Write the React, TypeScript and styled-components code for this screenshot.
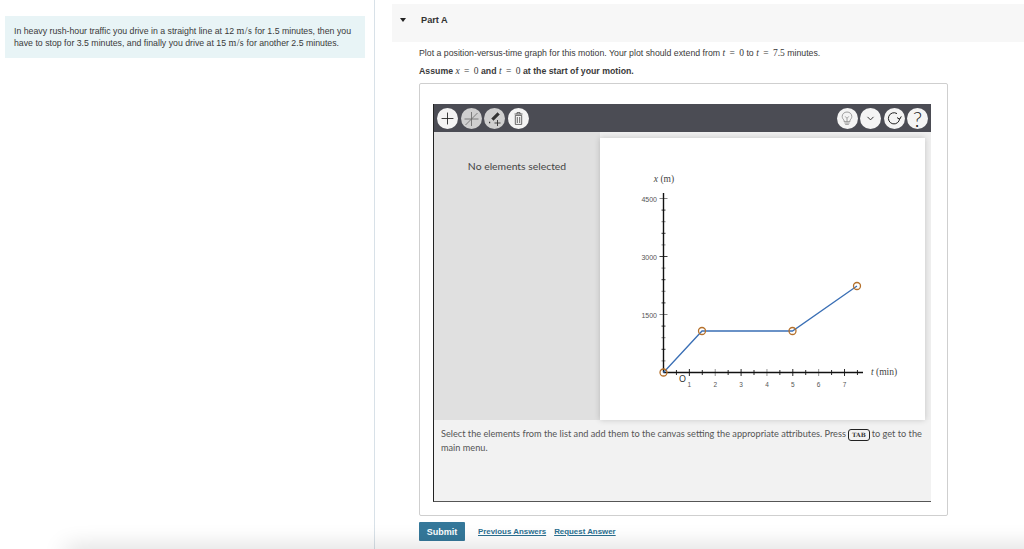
import React from 'react';
import styled, { createGlobalStyle } from 'styled-components';
import { Plus, ChevronDown } from 'lucide-react';

const GlobalStyle = createGlobalStyle`
    html, body {
        margin: 0;
        padding: 0;
        height: 100%;
        overflow: hidden;
        background: #fff;
    }
    #root {
        height: 100%;
    }
`;

const Page = styled.div`
    position: relative;
    width: 1024px;
    height: 549px;
    overflow: hidden;
    display: grid;
    grid-template-columns: 375px 1fr;
    font-family: "Liberation Sans", Arial, sans-serif;
    color: #3a3a3a;
`;

const BottomShadow = styled.div`
    position: absolute;
    left: 66px;
    right: -30px;
    bottom: -14px;
    height: 14px;
    pointer-events: none;
    box-shadow: 0 0 24px rgba(0, 0, 0, 0.2);
`;

const LeftColumn = styled.aside`
    border-right: 1px solid #d8e1e8;
    padding: 16px 9px 0 5px;
`;

const ProblemBox = styled.div`
    background: #e8f4f6;
    padding: 9px;
    font-size: 8.75px;
`;

const ProblemLine = styled.div`
    height: 12px;
    line-height: 12px;
    white-space: nowrap;
`;

const Unit = styled.span`
    font-family: "Liberation Serif", serif;
    font-size: 10px;
    letter-spacing: 0.4px;
`;

const Equation = styled.span`
    font-family: "Liberation Serif", serif;
    font-size: 9.5px;
    font-weight: normal;
    word-spacing: 2px;
`;

const Var = styled.i`
    font-style: italic;
`;

const RightColumn = styled.main`
    padding: 4px 0 0 17px;
    display: flex;
    flex-direction: column;
`;

const PartHeader = styled.div`
    height: 38px;
    background: #f7f7f7;
    display: flex;
    align-items: flex-start;
    padding-top: 10px;
    box-sizing: border-box;
    font-size: 9.2px;
    font-weight: bold;
    color: #333;
    line-height: 12px;
`;

const Caret = styled.span`
    width: 0;
    height: 0;
    margin: 4px 15px 0 8px;
    border-left: 3.5px solid transparent;
    border-right: 3.5px solid transparent;
    border-top: 4px solid #222;
`;

const PartBody = styled.div`
    padding: 0 76px 0 27px;
`;

const Line = styled.p<{ $bold?: boolean }>`
    margin: 0;
    font-size: 8.75px;
    line-height: 18px;
    height: 18px;
    white-space: nowrap;
    font-weight: ${p => (p.$bold ? 'bold' : 'normal')};
    &:first-child {
        margin-top: 2px;
    }
`;

const Card = styled.section`
    margin-top: 3px;
    height: 433px;
    box-sizing: border-box;
    border: 1px solid #cfcfcf;
    border-radius: 2px;
    padding: 20px 16px 0 13px;
`;

const Widget = styled.div`
    height: 398px;
    box-sizing: border-box;
    border-left: 1px solid #222;
    border-bottom: 1px solid #555;
    background: #f2f2f2;
    display: flex;
    flex-direction: column;
`;

const Toolbar = styled.div`
    height: 28px;
    flex: none;
    background: #4b4c54;
    display: flex;
    align-items: center;
    justify-content: space-between;
    padding: 0 3px;
`;

const ToolGroup = styled.div`
    display: flex;
    gap: 2.5px;
`;

const ToolButton = styled.span<{ $off?: boolean }>`
    width: 21px;
    height: 21px;
    border-radius: 50%;
    background: ${p => (p.$off ? '#cfcfcf' : '#f4f4f4')};
    color: ${p => (p.$off ? '#666' : '#222')};
    display: flex;
    align-items: center;
    justify-content: center;
`;

const HelpMark = styled.span`
    font-family: Lato, sans-serif;
    font-weight: 300;
    font-size: 21px;
    line-height: 21px;
    color: #222;
`;

const Stage = styled.div`
    height: 288px;
    flex: none;
    display: flex;
`;

const SidePanel = styled.div`
    width: 166px;
    flex: none;
    background: #e0e0e0;
    padding-top: 27px;
    box-sizing: border-box;
    text-align: center;
    font-family: Lato, sans-serif;
    font-size: 10.4px;
    line-height: 14px;
    color: #444;
`;

const CanvasWrap = styled.div`
    flex: 1;
    background: #efefef;
    padding: 6px 5px 0 0;
`;

const Canvas = styled.div`
    width: 325px;
    height: 282px;
    background: #fff;
    box-shadow: 0 0 6px rgba(0, 0, 0, 0.18);
`;

const Help = styled.div`
    padding: 7px 6px 0 7px;
    font-family: Lato, sans-serif;
    font-size: 9.2px;
    color: #555;
`;

const HelpLine = styled.div`
    height: 14px;
    line-height: 14px;
    white-space: nowrap;
`;

const Kbd = styled.span`
    display: inline-block;
    height: 10px;
    line-height: 10px;
    padding: 0 3px;
    margin: 0 2px;
    border: 1px solid #222;
    border-radius: 3px;
    font-family: "DejaVu Serif", serif;
    font-weight: bold;
    font-size: 6px;
    color: #333;
`;

const Actions = styled.div`
    margin-top: 6px;
    display: flex;
    align-items: center;
`;

const SubmitButton = styled.button`
    width: 46px;
    height: 19px;
    border: 0;
    border-radius: 1px;
    padding: 0;
    background: #35789a;
    color: #fff;
    font-family: "Liberation Sans", Arial, sans-serif;
    font-size: 9px;
    font-weight: bold;
    margin-right: 13px;
`;

const AnswerLink = styled.a`
    color: #2a6f90;
    font-size: 7.9px;
    font-weight: bold;
    text-decoration: underline;
    margin-right: 8px;
`;

const AxisLabel = styled.text`
    font-family: "Liberation Sans", Arial, sans-serif;
    font-size: 7px;
    fill: #555;
`;

const TickNumber = styled(AxisLabel)`
    font-size: 6.5px;
`;

const AxisTitle = styled.text`
    font-family: "Liberation Serif", serif;
    font-size: 9.5px;
    fill: #444;
`;

const OriginLabel = styled.text`
    font-family: "Open Sans", sans-serif;
    font-size: 9px;
    fill: #222;
`;

// graph geometry, in page pixels minus the canvas offset
const X0 = 63.5;
const Y0 = 234.5;
const XSTEP = 12.93;
const YSTEP = 11.6;
const points: [number, number][] = [
    [X0, Y0],
    [102, 193],
    [192.5, 193],
    [257, 148],
];

const Graph = () => (
    <svg width="325" height="282" viewBox="0 0 325 282">
        {Array.from({ length: 15 }, (_, i) => {
            const x = X0 + (i + 1) * XSTEP;
            return <line key={i} x1={x} x2={x} y1={Y0 - (i % 2 ? 3.5 : 2.5)} y2={Y0 + (i % 2 ? 3.5 : 2.5)} stroke={i % 4 === 3 ? '#888' : '#111'} strokeWidth="0.9" />;
        })}
        {Array.from({ length: 15 }, (_, i) => {
            const y = Y0 - (i + 1) * YSTEP;
            const major = (i + 1) % 5 === 0;
            return <line key={i} x1={X0 - (major ? 4 : 2)} x2={X0 + (major ? 4 : 2)} y1={y} y2={y} stroke={i % 2 ? '#222' : '#777'} strokeWidth="0.9" />;
        })}
        <line x1={X0} x2={263} y1={Y0} y2={Y0} stroke="#111" strokeWidth="1.4" />
        <line x1={X0} x2={X0} y1={55} y2={Y0} stroke="#111" strokeWidth="1.4" />
        <AxisTitle x="64" y="44" textAnchor="middle"><tspan fontStyle="italic">x</tspan> (m)</AxisTitle>
        {[['4500', 61], ['3000', 119], ['1500', 177]].map(([label, y]) => (
            <AxisLabel key={label} x="57" y={Number(y) + 2.5} textAnchor="end">{label}</AxisLabel>
        ))}
        {[1, 2, 3, 4, 5, 6, 7].map(n => (
            <TickNumber key={n} x={X0 + n * XSTEP * 2} y="248.5" textAnchor="middle">{n}</TickNumber>
        ))}
        <OriginLabel x="79" y="243.5">O</OriginLabel>
        <AxisTitle x="271" y="237"><tspan fontStyle="italic">t</tspan> (min)</AxisTitle>
        <polyline points={points.map(p => p.join(',')).join(' ')} fill="none" stroke="#3a6fb5" strokeWidth="1.3" />
        {points.map(([x, y]) => (
            <circle key={x} cx={x} cy={y} r="3.5" fill="none" stroke="#b5702a" strokeWidth="1.3" />
        ))}
    </svg>
);

const PlotIcon = () => (
    <svg width="17" height="17" viewBox="0 0 17 17" fill="none" stroke="currentColor" strokeWidth="0.8">
        <path d="M1.5 9H15.5M8.5 2V16M2.5 15L14.5 3" />
    </svg>
);

const PencilPlusIcon = () => (
    <svg width="17" height="17" viewBox="0 0 17 17" fill="none" stroke="#333">
        <path d="M5.5 8.5L11.5 2.5L13.5 4.5L7.5 10.5Z" fill="#333" strokeWidth="0.4" />
        <path d="M3 12.5H4.2" strokeWidth="1.3" />
        <path d="M8.5 13H14.5M11.5 10V16" strokeWidth="0.9" />
    </svg>
);

const TrashIcon = () => (
    <svg width="15" height="15" viewBox="0 0 15 15" fill="none" stroke="#444" strokeWidth="0.8">
        <path d="M3.5 3H11.5M6 3V1.6H9V3M4.3 4.4H10.7V13.4H4.3ZM6.3 6V12M8.7 6V12" />
    </svg>
);

const BulbIcon = () => (
    <svg width="18" height="18" viewBox="0 0 18 18" fill="none" stroke="#888" strokeWidth="0.8">
        <path d="M6 11C4.8 10 4.2 8.8 4.2 7.4C4.2 4.9 6.3 3 9 3S13.8 4.9 13.8 7.4C13.8 8.8 13.2 10 12 11V12.6H6ZM6.4 14H11.6M7.2 15.4H10.8M7.2 7.4L9 9.4L10.8 7.4M9 9.4V12.6" />
    </svg>
);

const RedoIcon = () => (
    <svg width="18" height="18" viewBox="0 0 18 18" fill="none" stroke="#222" strokeWidth="1">
        <path d="M12 4.6A5.6 5.6 0 1 0 14.6 9.5" />
        <path d="M12 8.6L14.7 10.2L16.3 7.4" />
    </svg>
);

export default function App() {
    return (
        <Page>
            <GlobalStyle />
            <LeftColumn>
                <ProblemBox>
                    <ProblemLine>In heavy rush-hour traffic you drive in a straight line at 12 <Unit>m/s</Unit> for 1.5 minutes, then you</ProblemLine>
                    <ProblemLine>have to stop for 3.5 minutes, and finally you drive at 15 <Unit>m/s</Unit> for another 2.5 minutes.</ProblemLine>
                </ProblemBox>
            </LeftColumn>
            <RightColumn>
                <PartHeader>
                    <Caret />
                    Part A
                </PartHeader>
                <PartBody>
                    <Line>
                        Plot a position-versus-time graph for this motion. Your plot should extend from <Equation><Var>t</Var> = 0</Equation> to <Equation><Var>t</Var> = 7.5</Equation> minutes.
                    </Line>
                    <Line $bold>
                        Assume <Equation><Var>x</Var> = 0</Equation> and <Equation><Var>t</Var> = 0</Equation> at the start of your motion.
                    </Line>
                    <Card>
                        <Widget>
                            <Toolbar>
                                <ToolGroup>
                                    <ToolButton><Plus size={19} strokeWidth={1.1} /></ToolButton>
                                    <ToolButton $off><PlotIcon /></ToolButton>
                                    <ToolButton $off><PencilPlusIcon /></ToolButton>
                                    <ToolButton><TrashIcon /></ToolButton>
                                </ToolGroup>
                                <ToolGroup>
                                    <ToolButton><BulbIcon /></ToolButton>
                                    <ToolButton><ChevronDown size={11} strokeWidth={2} /></ToolButton>
                                    <ToolButton><RedoIcon /></ToolButton>
                                    <ToolButton><HelpMark>?</HelpMark></ToolButton>
                                </ToolGroup>
                            </Toolbar>
                            <Stage>
                                <SidePanel>No elements selected</SidePanel>
                                <CanvasWrap>
                                    <Canvas><Graph /></Canvas>
                                </CanvasWrap>
                            </Stage>
                            <Help>
                                <HelpLine>Select the elements from the list and add them to the canvas setting the appropriate attributes. Press<Kbd>TAB</Kbd>to get to the</HelpLine>
                                <HelpLine>main menu.</HelpLine>
                            </Help>
                        </Widget>
                    </Card>
                    <Actions>
                        <SubmitButton>Submit</SubmitButton>
                        <AnswerLink href="#">Previous Answers</AnswerLink>
                        <AnswerLink href="#">Request Answer</AnswerLink>
                    </Actions>
                </PartBody>
            </RightColumn>
            <BottomShadow />
        </Page>
    );
}
